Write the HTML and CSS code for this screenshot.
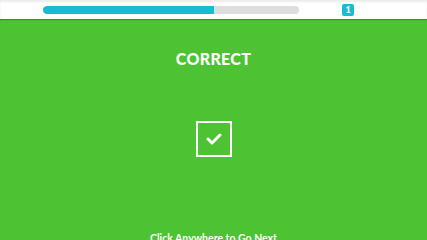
FILE: index.html
```html
<!DOCTYPE html>
<html lang="en">
<head>
  <meta charset="UTF-8">
  <title>Correct</title>
  <link rel="stylesheet" href="styles.css">
</head>
<body>
  <div class="topbar">
    <div class="progress"><div class="progress-fill"></div></div>
    <div class="badge">1</div>
  </div>

  <div class="result">
    <h1>CORRECT</h1>
    <div class="check-box">
      <svg width="16" height="12" viewBox="0 0 16 12">
        <path d="M2 6 L6 10 L14 2" fill="none" stroke="#fff" stroke-width="3" stroke-linecap="round" stroke-linejoin="round"/>
      </svg>
    </div>
    <p class="next">Click Anywhere to Go Next</p>
  </div>
</body>
</html>
```

FILE: styles.css
```css
body {
  margin: 0;
  padding: 0;
  font-family: Lato, "Open Sans", sans-serif;
  background-color: #4dc233;
  height: 240px;
  overflow: hidden;
}

.topbar {
  height: 19px;
  background-color: #fff;
  display: flex;
  align-items: center;
  padding-left: 43px;
  box-shadow: 0 1px 1px rgba(0, 0, 0, 0.25), inset 0 2px 2px rgba(0, 0, 0, 0.08);
  position: relative;
}

.progress {
  width: 256px;
  height: 8px;
  border-radius: 4px;
  background-color: #dedede;
  overflow: hidden;
}

.progress-fill {
  width: 171px;
  height: 100%;
  background-color: #17bccf;
  border-radius: 4px 0 0 4px;
}

.badge {
  margin-left: 43px;
  width: 12px;
  height: 12px;
  border-radius: 2px;
  background-color: #17bccf;
  color: #fff;
  font-size: 9px;
  font-weight: 900;
  line-height: 12px;
  text-align: center;
}

.result {
  display: flex;
  flex-direction: column;
  align-items: center;
  color: #fff;
}

h1 {
  margin: 31px 0 0 0;
  font-size: 16px;
  font-weight: 900;
  letter-spacing: 0.3px;
  line-height: 18px;
}

.check-box {
  margin-top: 53px;
  width: 32px;
  height: 32px;
  border: 2px solid #fff;
  display: flex;
  align-items: center;
  justify-content: center;
}

.next {
  margin: 75px 0 0 0;
  font-size: 10.5px;
  font-weight: 700;
  line-height: 13px;
}
```
